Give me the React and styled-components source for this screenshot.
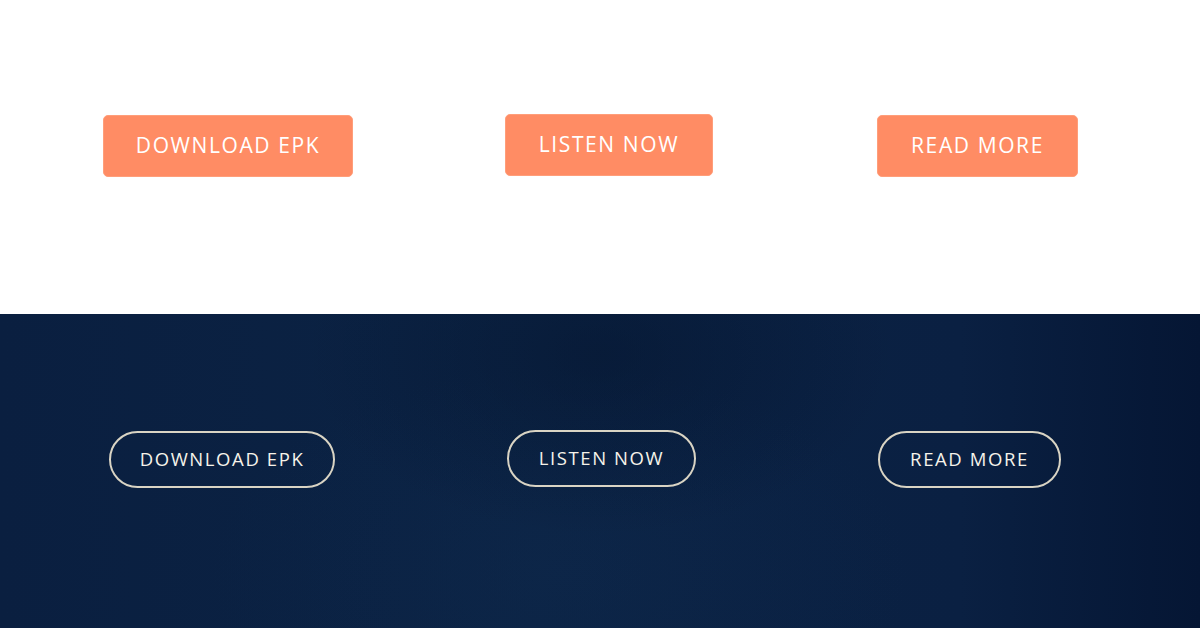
import React from "react";
import styled, { createGlobalStyle } from "styled-components";

const Global = createGlobalStyle`
  html, body { margin: 0; padding: 0; }
  body { width: 1200px; height: 628px; overflow: hidden; font-family: "Open Sans", "Noto Sans", sans-serif; }
`;

const Page = styled.div`
  width: 1200px;
  height: 628px;
  display: flex;
  flex-direction: column;
`;

const LightSection = styled.section`
  height: 314px;
  background: #ffffff;
  display: flex;
  flex-direction: column;
  padding-top: 114px;
  box-sizing: border-box;
`;

const DarkSection = styled.section`
  height: 314px;
  box-sizing: border-box;
  padding-top: 116px;
  background:
    radial-gradient(ellipse 420px 260px at 600px 40px, rgba(3, 16, 40, 0.4), transparent 70%),
    radial-gradient(ellipse 500px 300px at 560px 260px, rgba(20, 50, 90, 0.18), transparent 70%),
    linear-gradient(90deg, #0a1f40 0%, #0b2344 45%, #0a2042 80%, #051634 100%);
  display: flex;
  flex-direction: column;
`;

const Row = styled.div`
  display: flex;
  align-items: flex-start;
  padding-left: ${(p) => p.$pad}px;
`;

const SolidButton = styled.button`
  box-sizing: border-box;
  width: ${(p) => p.$w}px;
  height: 62px;
  margin-left: ${(p) => p.$ml || 0}px;
  margin-top: ${(p) => p.$mt || 0}px;
  background: #ff8c64;
  border: 1px solid #ff9e7a;
  border-radius: 5px;
  color: #ffffff;
  font-family: "Open Sans", "Noto Sans", sans-serif;
  font-size: 21px;
  letter-spacing: 1.6px;
  text-transform: uppercase;
  display: flex;
  align-items: center;
  justify-content: center;
  padding: 0 0 3px;
  cursor: pointer;
`;

const OutlineButton = styled.button`
  box-sizing: border-box;
  width: ${(p) => p.$w}px;
  height: 57px;
  margin-left: ${(p) => p.$ml || 0}px;
  margin-top: ${(p) => p.$mt || 0}px;
  background: transparent;
  border: 2px solid #d9d4c4;
  border-radius: 29px;
  color: #f6f3ea;
  font-family: "Open Sans", "Noto Sans", sans-serif;
  font-size: 18.5px;
  letter-spacing: 1.6px;
  text-transform: uppercase;
  display: flex;
  align-items: center;
  justify-content: center;
  padding: 0 0 3px;
  cursor: pointer;
`;

export default function App() {
  return (
    <Page>
      <Global />
      <LightSection>
        <Row $pad={103}>
          <SolidButton $w={250} $mt={1}>Download EPK</SolidButton>
          <SolidButton $w={208} $ml={152}>Listen Now</SolidButton>
          <SolidButton $w={201} $ml={164} $mt={1}>Read More</SolidButton>
        </Row>
      </LightSection>
      <DarkSection>
        <Row $pad={109}>
          <OutlineButton $w={226} $mt={1}>Download EPK</OutlineButton>
          <OutlineButton $w={189} $ml={172}>Listen Now</OutlineButton>
          <OutlineButton $w={183} $ml={182} $mt={1}>Read More</OutlineButton>
        </Row>
      </DarkSection>
    </Page>
  );
}
